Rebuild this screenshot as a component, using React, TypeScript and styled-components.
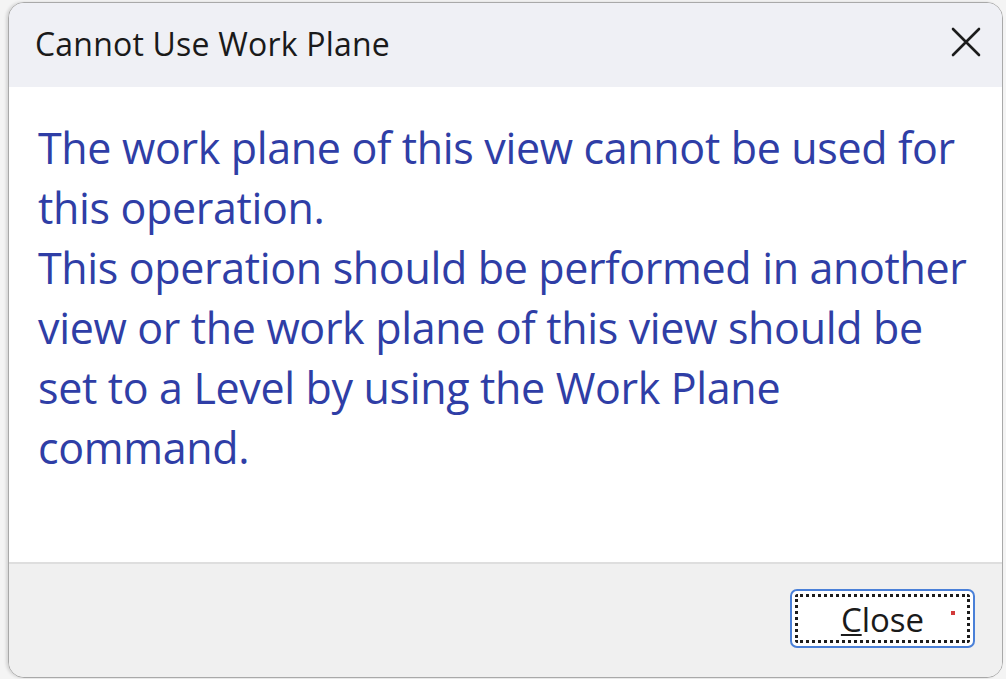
import React from 'react'
import styled, { createGlobalStyle } from 'styled-components'

const GlobalStyle = createGlobalStyle`
    html, body {
        margin: 0;
        padding: 0;
        background: #f4f4f4;
    }
    body {
        font-family: 'Open Sans', 'Noto Sans', sans-serif;
    }
`

const messageLines = [
    'The work plane of this view cannot be used for',
    'this operation.',
    'This operation should be performed in another',
    'view or the work plane of this view should be',
    'set to a Level by using the Work Plane',
    'command.',
]

export default function App() {
    return (
        <Page>
            <GlobalStyle />
            <Window>
                <TitleBar>
                    <Title>Cannot Use Work Plane</Title>
                    <CloseIcon aria-label="Close">
                        <svg width="32" height="32" viewBox="0 0 32 32">
                            <path
                                d="M3 3 L29 29 M29 3 L3 29"
                                stroke="#1c1c1c"
                                strokeWidth="2.6"
                                strokeLinecap="round"
                            />
                        </svg>
                    </CloseIcon>
                </TitleBar>
                <Body>
                    {messageLines.map((line) => (
                        <Line key={line}>{line}</Line>
                    ))}
                </Body>
                <Footer>
                    <Button>
                        <FocusRing>
                            <Underlined>C</Underlined>lose
                        </FocusRing>
                        <RedDot />
                    </Button>
                </Footer>
            </Window>
        </Page>
    )
}

const Page = styled.div`
    width: 1006px;
    height: 679px;
    padding: 2px 3px 3px 8px;
    box-sizing: border-box;
`

const Window = styled.div`
    display: flex;
    flex-direction: column;
    height: 100%;
    border: 1px solid #a9a9a9;
    border-radius: 16px;
    overflow: hidden;
    background: #ffffff;
    box-shadow: -2px 0 3px rgba(0, 0, 0, 0.12);
`

const TitleBar = styled.div`
    display: flex;
    flex-direction: row;
    align-items: center;
    justify-content: space-between;
    height: 84px;
    flex-shrink: 0;
    padding: 0 16px 0 26px;
    background: #eff0f5;
`

const Title = styled.div`
    font-family: 'Open Sans', 'Noto Sans', sans-serif;
    font-size: 32px;
    color: #1a1a1a;
    letter-spacing: 0.2px;
    margin-top: -4px;
`

const CloseIcon = styled.div`
    display: flex;
    align-items: center;
    justify-content: center;
    width: 40px;
    height: 40px;
    margin-top: -6px;
`

const Body = styled.div`
    flex: 1;
    display: flex;
    flex-direction: column;
    padding: 31px 0 0 29px;
    background: #ffffff;
`

const Line = styled.div`
    font-family: 'Open Sans', 'Noto Sans', sans-serif;
    font-size: 43px;
    line-height: 60px;
    color: #2f3ea6;
    white-space: nowrap;
    letter-spacing: -0.35px;
`

const Footer = styled.div`
    display: flex;
    flex-direction: row;
    justify-content: flex-end;
    align-items: flex-start;
    height: 115px;
    flex-shrink: 0;
    padding: 25px 27px 0 0;
    box-sizing: border-box;
    background: #f0f0f0;
    border-top: 2px solid #dedede;
`

const Button = styled.div`
    position: relative;
    width: 185px;
    height: 59px;
    box-sizing: border-box;
    border: 2px solid #4a80d8;
    border-radius: 7px;
    background: #ffffff;
    padding: 3px;
    display: flex;
`

const FocusRing = styled.div`
    flex: 1;
    display: flex;
    align-items: center;
    justify-content: center;
    border: 3px dotted #1c1c1c;
    border-radius: 3px;
    font-family: 'Open Sans', 'Noto Sans', sans-serif;
    font-size: 33px;
    color: #1a1a1a;
    padding-top: 2px;
`

const Underlined = styled.span`
    text-decoration: underline;
    text-underline-offset: 2px;
    text-decoration-thickness: 2px;
`

const RedDot = styled.span`
    position: absolute;
    top: 20px;
    right: 18px;
    width: 4px;
    height: 4px;
    background: #d23a3a;
`
